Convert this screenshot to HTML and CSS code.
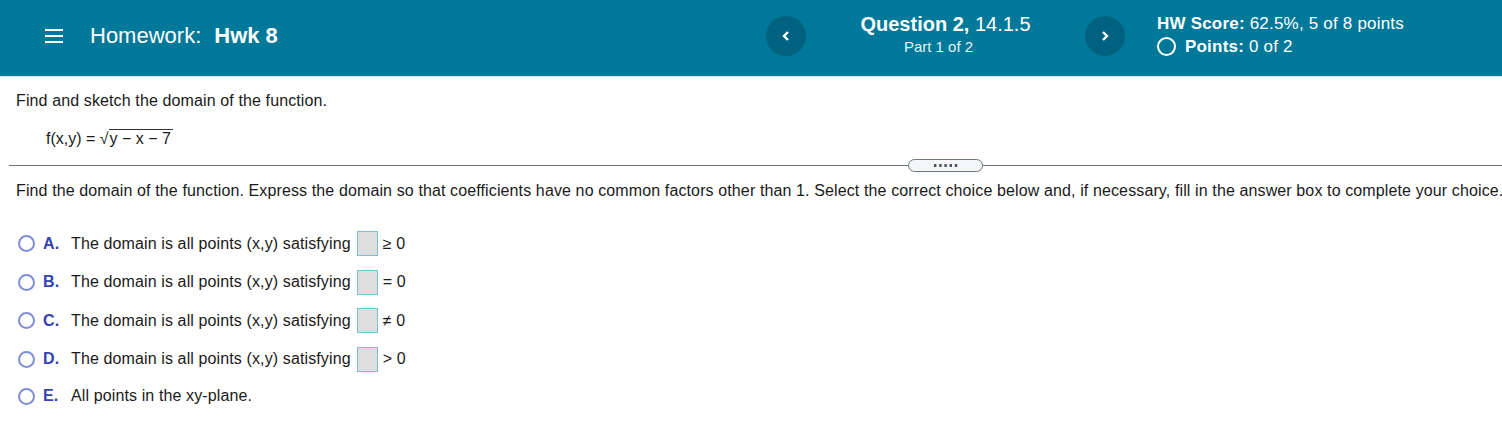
FILE: index.html
```html
<!DOCTYPE html>
<html>
<head>
<meta charset="utf-8">
<link rel="stylesheet" href="styles.css">
</head>
<body>
<header class="topbar">
  <div class="left">
    <svg class="menu" width="18" height="14" viewBox="0 0 18 14"><rect x="0" y="0" width="18" height="2" fill="#fff"/><rect x="0" y="6" width="18" height="2" fill="#fff"/><rect x="0" y="12" width="18" height="2" fill="#fff"/></svg>
    <span class="hw">Homework:</span><b class="hwname">Hwk 8</b>
  </div>
  <div class="nav">
    <div class="circ"><svg width="8" height="12" viewBox="0 0 8 12"><path d="M6 2 L2 6 L6 10" stroke="#fff" stroke-width="2.4" fill="none"/></svg></div>
    <div class="qinfo">
      <div class="qtitle"><b>Question 2,</b> 14.1.5</div>
      <div class="qpart">Part 1 of 2</div>
    </div>
    <div class="circ"><svg width="8" height="12" viewBox="0 0 8 12"><path d="M2 2 L6 6 L2 10" stroke="#fff" stroke-width="2.4" fill="none"/></svg></div>
  </div>
  <div class="score">
    <div><b>HW Score:</b> 62.5%, 5 of 8 points</div>
    <div class="pts"><span class="ring"></span><b>Points:</b>&nbsp;0 of 2</div>
  </div>
</header>
<main class="content">
  <p class="intro">Find and sketch the domain of the function.</p>
  <p class="func">f(x,y) = <span class="sqrt">√<span class="rad">y − x − 7</span></span></p>
  <div class="divider"><span class="pill"><svg width="24" height="3" viewBox="0 0 24 3"><rect x="0" y="0" width="2.4" height="3" fill="#4a5565"/><rect x="5.2" y="0" width="2.4" height="3" fill="#4a5565"/><rect x="10.4" y="0" width="2.4" height="3" fill="#4a5565"/><rect x="15.6" y="0" width="2.4" height="3" fill="#4a5565"/><rect x="20.8" y="0" width="2.4" height="3" fill="#4a5565"/></svg></span></div>
  <p class="instr">Find the domain of the function. Express the domain so that coefficients have no common factors other than 1. Select the correct choice below and, if necessary, fill in the answer box to complete your choice.</p>
  <ul class="choices">
    <li><span class="radio"></span><span class="letter">A.</span><span class="txt">The domain is all points (x,y) satisfying</span><span class="box"></span><span class="rel">≥ 0</span></li>
    <li><span class="radio"></span><span class="letter">B.</span><span class="txt">The domain is all points (x,y) satisfying</span><span class="box"></span><span class="rel">= 0</span></li>
    <li><span class="radio"></span><span class="letter">C.</span><span class="txt">The domain is all points (x,y) satisfying</span><span class="box"></span><span class="rel">≠ 0</span></li>
    <li><span class="radio"></span><span class="letter">D.</span><span class="txt">The domain is all points (x,y) satisfying</span><span class="box"></span><span class="rel">&gt; 0</span></li>
    <li class="short"><span class="radio"></span><span class="letter">E.</span><span class="txt">All points in the xy-plane.</span></li>
  </ul>
</main>
</body>
</html>
```
FILE: styles.css
```css
* { box-sizing: border-box; }
body {
  margin: 0;
  font-family: "Liberation Sans", Arial, sans-serif;
  color: #1a1a1a;
  background: #fff;
}
.topbar {
  height: 77px;
  background: #007899;
  color: #fff;
  display: flex;
  align-items: center;
  padding-bottom: 4px;
  border-bottom: 1px solid #d8e6ec;
}
.left {
  width: 766px;
  display: flex;
  align-items: center;
  padding-left: 45px;
  font-size: 22px;
}
.menu { margin-right: 27px; }
.hw { margin-right: 13px; }
.hwname { font-weight: bold; }
.nav {
  display: flex;
  align-items: center;
}
.circ {
  width: 40px;
  height: 40px;
  border-radius: 50%;
  background: #00627f;
  display: flex;
  align-items: center;
  justify-content: center;
}
.qinfo {
  width: 279px;
  text-align: center;
  margin-top: -3px;
}
.qtitle { font-size: 20px; line-height: 22px; }
.qpart { font-size: 15px; line-height: 20px; padding-top: 2px; padding-right: 14px; color: #e6f1f5; }
.score {
  margin-left: 32px;
  font-size: 17px;
  letter-spacing: 0.2px;
  line-height: 23px;
  margin-top: -2px;
}
.pts { display: flex; align-items: center; }
.ring {
  width: 19px;
  height: 19px;
  border: 2px solid #fff;
  border-radius: 50%;
  margin-right: 9px;
}
.content { padding: 0 0 0 16px; font-size: 16px; letter-spacing: 0.12px; }
.content p { margin: 0; }
.intro { padding-top: 15px; line-height: 18px; }
.func { padding: 20px 0 0 30px; line-height: 18px; letter-spacing: 0; }
.rad { border-top: 1px solid #333; padding-left: 1px; padding-right: 2px; }
.divider {
  margin: 11px 0 0 -7px;
  height: 13px;
  display: flex;
  align-items: center;
  position: relative;
}
.divider::before {
  content: "";
  position: absolute;
  left: 0; right: 0; top: 6px;
  border-top: 1px solid #6b7585;
}
.pill {
  position: relative;
  margin-left: 899px;
  width: 75px;
  height: 13px;
  border: 1px solid #6b7585;
  border-radius: 7px;
  background: #f4f6f8;
  display: flex;
  align-items: center;
  justify-content: center;
}
.instr { padding-top: 10px; line-height: 18px; white-space: nowrap; }
.choices { list-style: none; margin: 31px 0 0 2px; padding: 0; }
.choices li {
  display: flex;
  align-items: center;
  height: 25px;
  margin-bottom: 13.5px;
}
.choices li.short { height: 20px; align-items: flex-end; }
.radio {
  width: 17px;
  height: 17px;
  border: 2px solid #7f8ed8;
  border-radius: 50%;
  margin-right: 8px;
}
.letter {
  color: #3442b4;
  font-weight: bold;
  width: 28px;
}
.box {
  width: 21px;
  height: 25px;
  background: #dedede;
  border: 1px solid #7bbfd2;
  margin: 0 5px 0 6px;
}
```
